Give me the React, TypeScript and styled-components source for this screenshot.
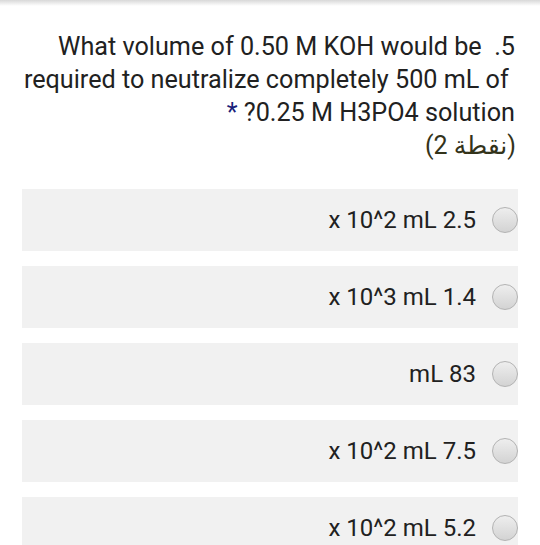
import React from "react";
import styled, { createGlobalStyle } from "styled-components";

const GlobalStyle = createGlobalStyle`
  html, body {
    margin: 0;
    padding: 0;
    background: #ffffff;
  }
  body {
    font-family: Roboto, "DejaVu Sans", "Noto Sans", sans-serif;
    color: #212121;
    overflow: hidden;
  }
`;

const TopShade = styled.div`
  height: 6px;
  background: linear-gradient(#d8d8d8, #ffffff);
`;

const Page = styled.main`
  direction: rtl;
  padding: 0 22px;
`;

const Question = styled.p`
  margin: 24px 3px 0 -8px;
  font-size: 25.2px;
  line-height: 33px;
`;

const Required = styled.span`
  color: #1a1f7a;
`;

const Points = styled.div`
  direction: ltr;
  unicode-bidi: isolate;
  text-align: right;
  margin-right: 2px;
  font-size: 25px;
  line-height: 33px;
  color: #33331a;
`;

const Options = styled.div`
  display: flex;
  flex-direction: column;
  gap: 15px;
  margin-top: 27px;
`;

const Option = styled.label`
  display: flex;
  align-items: center;
  gap: 16px;
  height: 62px;
  background: #f1f1f1;
  font-size: 24px;
  color: #212121;
`;

const Radio = styled.span`
  flex: none;
  box-sizing: border-box;
  width: 26px;
  height: 26px;
  border-radius: 50%;
  border: 1px solid #b3b3b3;
  background: linear-gradient(#eeeeee, #d3d3d3);
`;

const answers = [
  "2.5 x 10^2 mL",
  "1.4 x 10^3 mL",
  "83 mL",
  "7.5 x 10^2 mL",
  "5.2 x 10^2 mL",
];

export default function App() {
  return (
    <>
      <GlobalStyle />
      <TopShade />
      <Page>
        <Question>
          {"5. What volume of 0.50 M KOH would be\u00A0 required to neutralize completely 500 mL of\u00A0 0.25 M H3PO4 solution? "}
          <Required>*</Required>
        </Question>
        <Points>(2 نقطة)</Points>
        <Options>
          {answers.map((a) => (
            <Option key={a}>
              <Radio />
              <span>{a}</span>
            </Option>
          ))}
        </Options>
      </Page>
    </>
  );
}
